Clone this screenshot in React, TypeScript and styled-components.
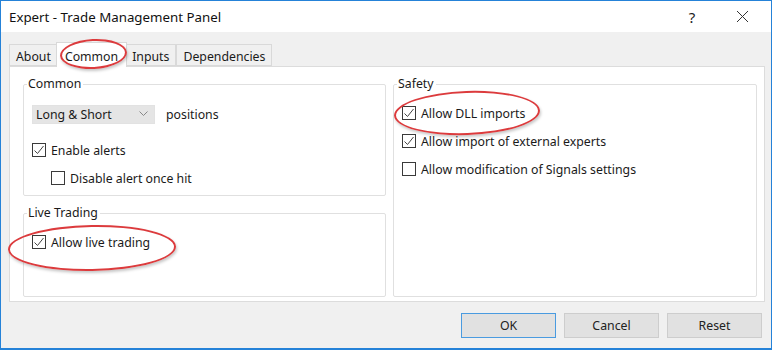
import styled, { createGlobalStyle } from 'styled-components';

const GlobalStyle = createGlobalStyle`
    html, body {
        margin: 0;
        padding: 0;
        background: #ffffff;
    }
    * {
        box-sizing: border-box;
    }
`;

const Window = styled.div`
    position: relative;
    width: 772px;
    height: 350px;
    display: flex;
    flex-direction: column;
    border: 1px solid #2582d8;
    border-bottom-width: 2px;
    font-family: 'Noto Sans', 'Liberation Sans', sans-serif;
    color: #1a1a1a;
    overflow: hidden;
`;

const TitleBar = styled.div`
    height: 31px;
    flex-shrink: 0;
    background: #ffffff;
    display: flex;
    align-items: center;
    padding: 0 4px 0 8px;
`;

const Title = styled.div`
    flex: 1;
    font-size: 13.3px;
    color: #111;
`;

const TitleButton = styled.div`
    width: 50px;
    height: 31px;
    display: flex;
    align-items: center;
    justify-content: center;
    font-size: 15px;
    color: #222;
`;

const Body = styled.div`
    flex: 1;
    display: flex;
    flex-direction: column;
    background: #f0f0f0;
    padding: 10px 6px 0 8px;
`;

const TabStrip = styled.div`
    display: flex;
    align-items: flex-end;
    height: 24px;
    position: relative;
    z-index: 1;
`;

const Tab = styled.div<{ $active?: boolean }>`
    height: ${(p) => (p.$active ? '25px' : '22px')};
    margin-bottom: ${(p) => (p.$active ? '-1px' : '0')};
    padding: 0 ${(p) => (p.$active ? '8px' : '6px')};
    padding-top: 2px;
    display: flex;
    align-items: center;
    font-size: 12.3px;
    background: ${(p) => (p.$active ? '#ffffff' : '#f0f0f0')};
    border: 1px solid #d9d9d9;
    border-bottom: ${(p) => (p.$active ? 'none' : '1px solid #d9d9d9')};
    margin-left: ${(p) => (p.$active ? '-2px' : '0')};
    margin-right: ${(p) => (p.$active ? '-2px' : '0')};
    position: relative;
    z-index: ${(p) => (p.$active ? 2 : 1)};

    & + & {
        border-left: ${(p) => (p.$active ? '1px solid #d9d9d9' : 'none')};
    }
`;

const TabPanel = styled.div`
    height: 236px;
    background: #ffffff;
    border: 1px solid #dcdcdc;
    padding: 9px 8px 4px 13px;
    display: grid;
    grid-template-columns: 363px 364px;
    gap: 7px;
`;

const Column = styled.div`
    display: flex;
    flex-direction: column;
    gap: 9px;
`;

const Group = styled.fieldset<{ $grow?: boolean; $height?: number }>`
    margin: 0;
    padding: 0 0 0 8px;
    border: 1px solid #e0e0e0;
    border-radius: 2px;
    min-width: 0;
    flex: ${(p) => (p.$grow ? 1 : 'none')};
    height: ${(p) => (p.$height ? `${p.$height}px` : 'auto')};
`;

const Legend = styled.legend`
    font-size: 12.3px;
    padding: 0 2px 0 1px;
    margin-left: -5px;
    line-height: 16px;
    color: #1a1a1a;
`;

const GroupContent = styled.div<{ $top: number; $gap?: number }>`
    display: flex;
    flex-direction: column;
    padding-top: ${(p) => p.$top}px;
    gap: ${(p) => p.$gap ?? 8}px;
`;

const Row = styled.div<{ $indent?: number; $mt?: number }>`
    display: flex;
    align-items: center;
    height: 20px;
    margin-left: ${(p) => p.$indent ?? 0}px;
    margin-top: ${(p) => p.$mt ?? 0}px;
    font-size: 12.3px;
`;

const Select = styled.div`
    width: 123px;
    height: 19px;
    background: #e5e5e5;
    border: 1px solid #e2e2e2;
    display: flex;
    align-items: center;
    justify-content: space-between;
    padding: 0 6px 0 3px;
    font-size: 12.3px;
    margin-right: 11px;
`;

const Box = styled.span`
    width: 14px;
    height: 14px;
    border: 1px solid #3a3a3a;
    background: #fff;
    display: inline-flex;
    align-items: center;
    justify-content: center;
    margin-right: 5px;
    flex-shrink: 0;
`;

const ButtonRow = styled.div`
    display: flex;
    justify-content: flex-end;
    gap: 8px;
    padding: 11px 3px 0 0;
`;

const Button = styled.div<{ $default?: boolean }>`
    width: 95px;
    height: 25px;
    display: flex;
    align-items: center;
    justify-content: center;
    font-size: 12.3px;
    color: #222;
    background: #e1e1e1;
    border: 1px solid ${(p) => (p.$default ? '#4a9be0' : '#cdcdcd')};
`;

const Annotation = styled.div<{ $x: number; $y: number; $w: number; $h: number; $rot?: number }>`
    position: absolute;
    left: ${(p) => p.$x}px;
    top: ${(p) => p.$y}px;
    width: ${(p) => p.$w}px;
    height: ${(p) => p.$h}px;
    border: 2.5px solid #dc3b3d;
    border-radius: 50%;
    transform: rotate(${(p) => p.$rot ?? 0}deg);
    box-shadow: 1px 2px 3px rgba(0, 0, 0, 0.22);
    pointer-events: none;
    z-index: 5;
`;

const CheckBox = ({ checked }: { checked?: boolean }) => (
    <Box>
        {checked && (
            <svg width="12" height="12" viewBox="0 0 12 12">
                <polyline points="1.5,6.5 4.5,9.5 10.5,2" fill="none" stroke="#444" strokeWidth="1" />
            </svg>
        )}
    </Box>
);

const Check = ({ label, checked, indent, mt }: { label: string; checked?: boolean; indent?: number; mt?: number }) => (
    <Row $indent={indent} $mt={mt}>
        <CheckBox checked={checked} />
        {label}
    </Row>
);

const App = () => {
    return (
        <>
            <GlobalStyle />
            <Window>
                <TitleBar>
                    <Title>Expert - Trade Management Panel</Title>
                    <TitleButton>?</TitleButton>
                    <TitleButton>
                        <svg width="13" height="13" viewBox="0 0 13 13">
                            <path d="M1 1 L12 12 M12 1 L1 12" stroke="#333" strokeWidth="1" />
                        </svg>
                    </TitleButton>
                </TitleBar>
                <Body>
                    <TabStrip>
                        <Tab>About</Tab>
                        <Tab $active>Common</Tab>
                        <Tab>Inputs</Tab>
                        <Tab>Dependencies</Tab>
                    </TabStrip>
                    <TabPanel>
                        <Column>
                            <Group $height={120}>
                                <Legend>Common</Legend>
                                <GroupContent $top={12} $gap={0}>
                                    <Row>
                                        <Select>
                                            Long &amp; Short
                                            <svg width="9" height="6" viewBox="0 0 9 6">
                                                <polyline points="0.5,0.5 4.5,4.5 8.5,0.5" fill="none" stroke="#888" strokeWidth="1" />
                                            </svg>
                                        </Select>
                                        positions
                                    </Row>
                                    <Check label="Enable alerts" checked mt={16} />
                                    <Check label="Disable alert once hit" indent={19} mt={8} />
                                </GroupContent>
                            </Group>
                            <Group $grow>
                                <Legend>Live Trading</Legend>
                                <GroupContent $top={11}>
                                    <Check label="Allow live trading" checked />
                                </GroupContent>
                            </Group>
                        </Column>
                        <Column>
                            <Group $grow>
                                <Legend>Safety</Legend>
                                <GroupContent $top={11}>
                                    <Check label="Allow DLL imports" checked />
                                    <Check label="Allow import of external experts" checked />
                                    <Check label="Allow modification of Signals settings" />
                                </GroupContent>
                            </Group>
                        </Column>
                    </TabPanel>
                    <ButtonRow>
                        <Button $default>OK</Button>
                        <Button>Cancel</Button>
                        <Button>Reset</Button>
                    </ButtonRow>
                </Body>
                <Annotation $x={59} $y={38} $w={67} $h={30} $rot={-3} />
                <Annotation $x={393} $y={90} $w={146} $h={44} $rot={-2} />
                <Annotation $x={7} $y={224} $w={168} $h={46} $rot={-1} />
            </Window>
        </>
    );
};

export default App;
